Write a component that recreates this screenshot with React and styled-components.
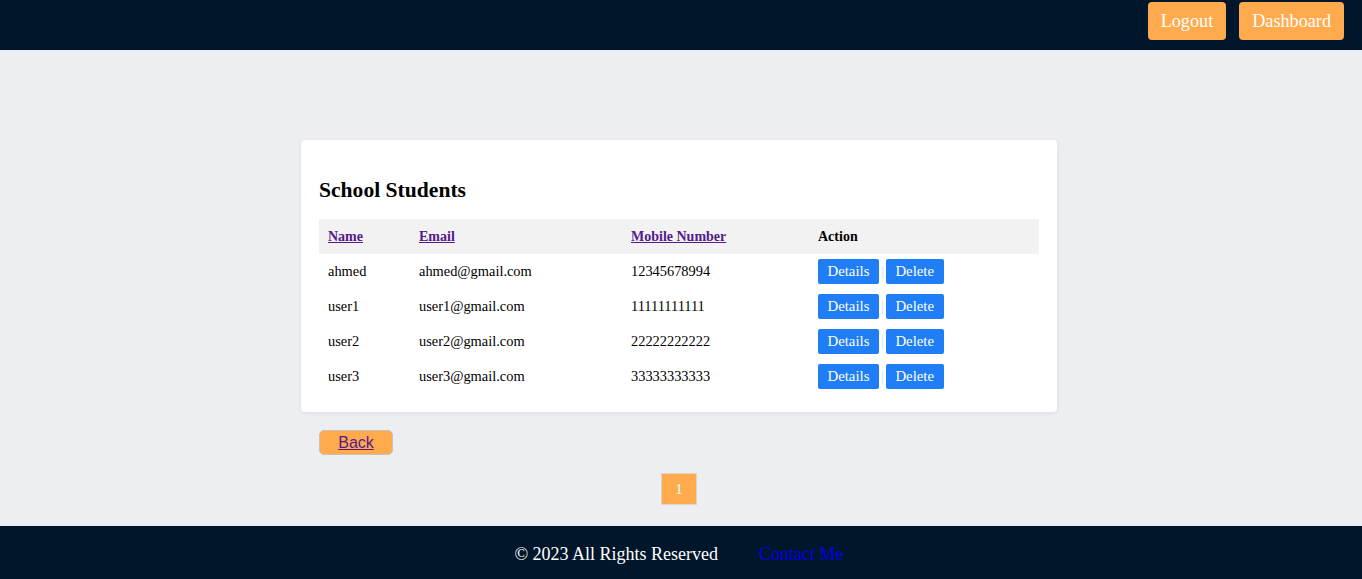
import React from "react";
import styled, { createGlobalStyle } from "styled-components";

const Global = createGlobalStyle`
  html, body { margin: 0; padding: 0; }
  body {
    background: #edeef2;
    font-family: "Liberation Serif", "Times New Roman", serif;
    color: #000;
  }
`;

const Page = styled.div`
  min-height: 579px;
  display: flex;
  flex-direction: column;
`;

const Header = styled.header`
  height: 50px;
  background: #00162b;
  display: flex;
  justify-content: flex-end;
  align-items: flex-start;
  gap: 13px;
  padding: 2px 18px 0 0;
  box-sizing: border-box;
`;

const NavButton = styled.button`
  height: 38px;
  padding: 0 13px;
  background: #ffaa4c;
  color: #fff;
  border: none;
  border-radius: 4px;
  font-family: "Liberation Serif", serif;
  font-size: 18.2px;
  cursor: pointer;
`;

const Main = styled.main`
  flex: 1;
  padding: 90px 4px 20px 0;
  display: flex;
  flex-direction: column;
  align-items: center;
`;

const Column = styled.div`
  width: 756px;
  display: flex;
  flex-direction: column;
`;

const Card = styled.section`
  background: #fff;
  border-radius: 4px;
  box-shadow: 0 1px 4px rgba(0, 0, 0, 0.08);
  padding: 18px;
`;

const Title = styled.h2`
  margin: 21px 0 17px;
  font-size: 21.6px;
  font-weight: bold;
  line-height: 23px;
`;

const Table = styled.table`
  width: 100%;
  border-collapse: collapse;
  table-layout: fixed;
  font-size: 14.4px;
`;

const HeadRow = styled.tr`
  background: #f2f2f2;
`;

const Th = styled.th`
  height: 35px;
  padding: 0 9px;
  text-align: left;
  font-size: 14px;
  width: ${(p) => p.$w || "auto"};
`;

const SortLink = styled.a`
  color: #551a8b;
  text-decoration: underline;
`;

const Td = styled.td`
  height: 35px;
  padding: 0 9px;
  vertical-align: middle;
`;

const Actions = styled.div`
  display: flex;
  align-items: center;
  gap: 2px;
`;

const ActionButton = styled.button`
  height: 25px;
  padding: 0 9.5px;
  background: #1f7ef5;
  color: #fff;
  border: none;
  border-radius: 2px;
  font-family: "Liberation Serif", serif;
  font-size: 14.8px;
  cursor: pointer;
`;

const Sep = styled.span`
  color: #d8dde3;
  font-size: 14px;
  width: 3px;
`;

const BackButton = styled.button`
  align-self: flex-start;
  margin: 18px 0 0 18px;
  width: 74px;
  height: 25px;
  box-sizing: border-box;
  background: #ffaa4c;
  border: 1px solid #c9c2b8;
  border-radius: 5px;
  font-family: "Liberation Sans", Arial, sans-serif;
  font-size: 16px;
  padding: 0;
  color: #551a8b;
  text-decoration: underline;
  cursor: pointer;
`;

const Pager = styled.div`
  display: flex;
  justify-content: center;
  margin-top: 18px;
`;

const PageNum = styled.span`
  width: 36px;
  height: 32px;
  box-sizing: border-box;
  display: flex;
  align-items: center;
  justify-content: center;
  background: #ffaa4c;
  border: 1px solid #e0d4c4;
  color: #fff;
  font-size: 15px;
`;

const Footer = styled.footer`
  height: 53px;
  box-sizing: border-box;
  padding: 3px 4px 0 0;
  background: #00162b;
  display: flex;
  justify-content: center;
  align-items: center;
  gap: 41px;
  font-size: 18px;
`;

const Copy = styled.span`
  color: #fff;
`;

const Contact = styled.a`
  color: #0000ee;
  text-decoration: none;
`;

const students = [
  { name: "ahmed", email: "ahmed@gmail.com", mobile: "12345678994" },
  { name: "user1", email: "user1@gmail.com", mobile: "11111111111" },
  { name: "user2", email: "user2@gmail.com", mobile: "22222222222" },
  { name: "user3", email: "user3@gmail.com", mobile: "33333333333" },
];

export default function App() {
  return (
    <Page>
      <Global />
      <Header>
        <NavButton>Logout</NavButton>
        <NavButton>Dashboard</NavButton>
      </Header>
      <Main>
        <Column>
          <Card>
            <Title>School Students</Title>
            <Table>
              <thead>
                <HeadRow>
                  <Th $w="73px"><SortLink href="#">Name</SortLink></Th>
                  <Th $w="194px"><SortLink href="#">Email</SortLink></Th>
                  <Th $w="169px"><SortLink href="#">Mobile Number</SortLink></Th>
                  <Th>Action</Th>
                </HeadRow>
              </thead>
              <tbody>
                {students.map((s) => (
                  <tr key={s.name}>
                    <Td>{s.name}</Td>
                    <Td>{s.email}</Td>
                    <Td>{s.mobile}</Td>
                    <Td>
                      <Actions>
                        <ActionButton>Details</ActionButton>
                        <Sep>|</Sep>
                        <ActionButton>Delete</ActionButton>
                      </Actions>
                    </Td>
                  </tr>
                ))}
              </tbody>
            </Table>
          </Card>
          <BackButton>Back</BackButton>
          <Pager>
            <PageNum>1</PageNum>
          </Pager>
        </Column>
      </Main>
      <Footer>
        <Copy>© 2023 All Rights Reserved</Copy>
        <Contact href="#">Contact Me</Contact>
      </Footer>
    </Page>
  );
}
